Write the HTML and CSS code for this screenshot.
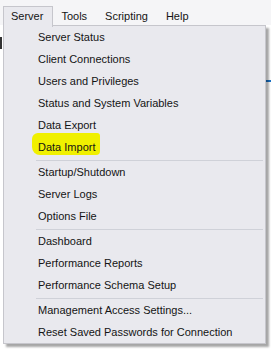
FILE: index.html
```html
<!DOCTYPE html>
<html>
<head>
<meta charset="utf-8">
<link rel="stylesheet" href="styles.css">
</head>
<body>
<div class="menubar">
  <div class="mi active">Server</div>
  <div class="mi">Tools</div>
  <div class="mi">Scripting</div>
  <div class="mi">Help</div>
</div>
<div class="content">
  <div class="bg-glyph"></div>
  <div class="bg-right"></div>
</div>
<div class="menu">
  <div class="item">Server Status</div>
  <div class="item">Client Connections</div>
  <div class="item">Users and Privileges</div>
  <div class="item">Status and System Variables</div>
  <div class="item">Data Export</div>
  <div class="item marked"><span>Data Import</span></div>
  <div class="sep"></div>
  <div class="item">Startup/Shutdown</div>
  <div class="item">Server Logs</div>
  <div class="item">Options File</div>
  <div class="sep"></div>
  <div class="item">Dashboard</div>
  <div class="item">Performance Reports</div>
  <div class="item">Performance Schema Setup</div>
  <div class="sep"></div>
  <div class="item">Management Access Settings...</div>
  <div class="item">Reset Saved Passwords for Connection</div>
</div>
</body>
</html>
```
FILE: styles.css
```css
html, body {
  margin: 0;
  padding: 0;
}
body {
  width: 271px;
  height: 352px;
  overflow: hidden;
  background: #f5f5f7;
  font-family: "Liberation Sans", Arial, sans-serif;
  font-size: 11px;
  color: #141414;
  position: relative;
}
.menubar {
  display: flex;
  height: 25px;
  padding-left: 3px;
  padding-top: 6px;
  box-sizing: border-box;
}
.mi {
  padding: 0 9px 0 7px;
  border: 1px solid transparent;
  border-bottom: none;
  line-height: 18px;
}
.mi.active {
  background: #e9e9ee;
  border-color: #c6c6cc;
  position: relative;
  z-index: 2;
  height: 20px;
}
.content {
  height: 327px;
  background: #ffffff;
  position: relative;
}
.bg-glyph {
  position: absolute;
  left: 0;
  top: 12px;
  width: 2px;
  height: 12px;
  background: #333;
}
.bg-right {
  position: absolute;
  right: 0;
  top: 55px;
  width: 10px;
  height: 2px;
  background: #1a73c8;
}
.menu {
  position: absolute;
  left: 3px;
  top: 25px;
  width: 263px;
  box-sizing: border-box;
  background: #e9e9ee;
  border: 1px solid #c6c6cc;
  box-shadow: 3px 3px 2px rgba(0, 0, 0, 0.35);
  z-index: 1;
}
.item {
  height: 22px;
  line-height: 22px;
  padding-left: 34px;
  white-space: nowrap;
  position: relative;
}
.item.marked span {
  position: relative;
}
.item.marked::before {
  content: "";
  position: absolute;
  left: 28px;
  top: -3px;
  width: 68px;
  height: 22px;
  background: #f0f000;
  border-radius: 6px 3px 4px 8px;
}
.sep {
  height: 1px;
  margin: 2px 2px 0 32px;
  background: #cfd1d8;
}
```
